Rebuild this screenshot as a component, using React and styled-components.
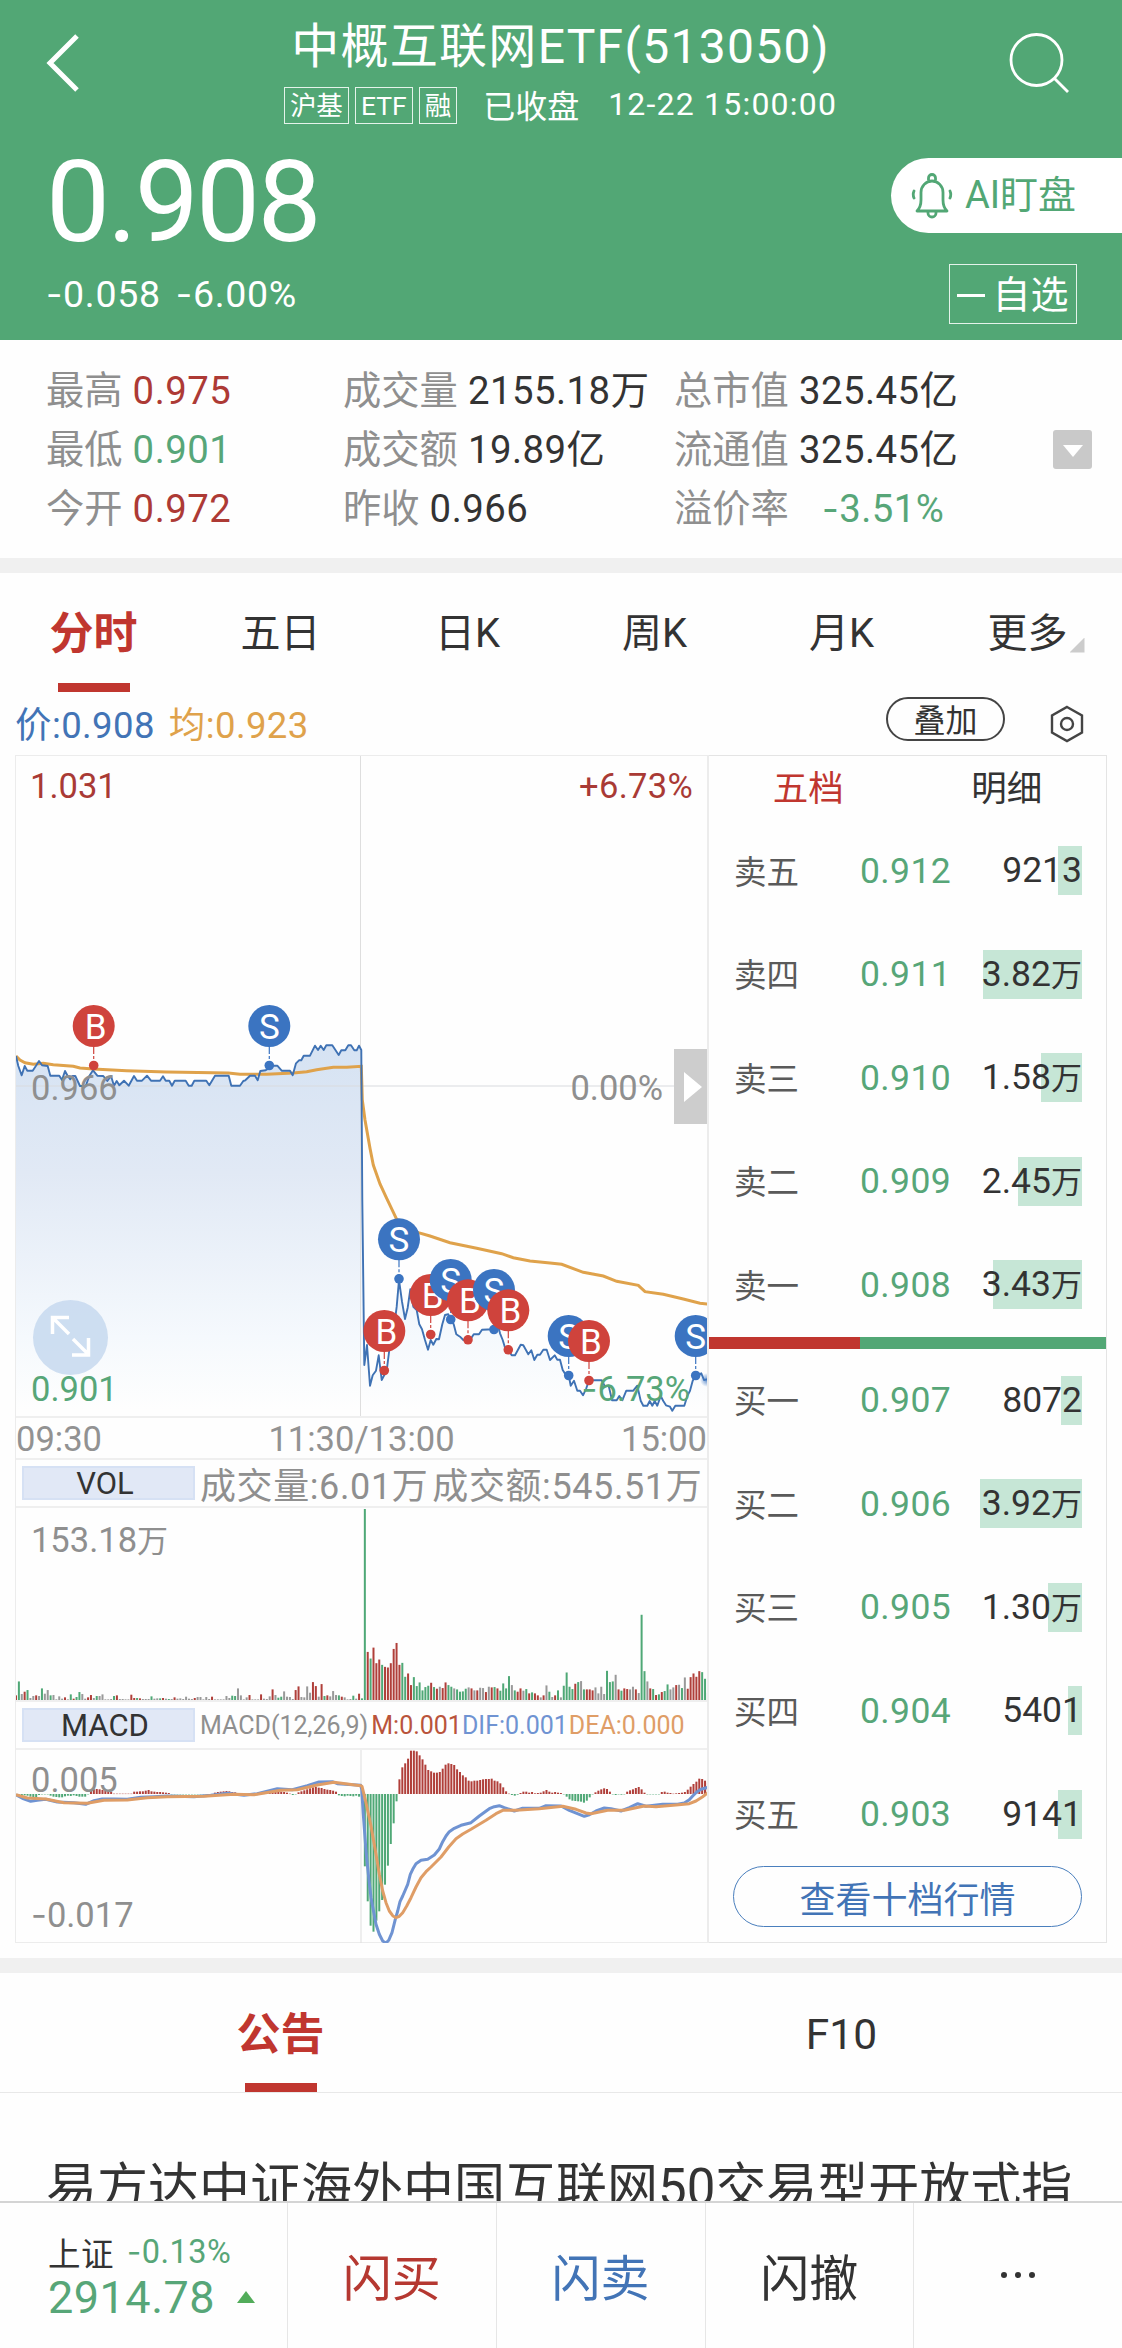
import styled, { createGlobalStyle } from "styled-components";

const GlobalStyle = createGlobalStyle`
  :root {
    --green: #52a775;
    --green-text: #57a678;
    --red: #c0362f;
    --red-text: #ad3a35;
    --blue: #3b74c1;
    --orange: #dfa24b;
    --ink: #333;
    --muted: #8f8f8f;
    --line: #ececec;
    --band: #f0f0f0;
  }
  * {
    box-sizing: border-box;
  }
  body {
    margin: 0;
    background: #fefefe;
    color: var(--ink);
    font-family: Roboto, "Noto Sans CJK SC", sans-serif;
  }
`;

const Screen = styled.div`
  display: flex;
  flex-direction: column;
  width: 1122px;
  height: 2348px;
  overflow: hidden;
  background: #fefefe;
`;

/* ---------- header ---------- */

const Header = styled.header`
  flex: none;
  height: 340px;
  padding-left: 46px;
  background: var(--green);
  color: #fff;
`;

const TitleBar = styled.div`
  display: flex;
  justify-content: space-between;
  align-items: flex-start;
  height: 137px;
  padding-right: 52px;
`;

const BackIcon = styled.svg`
  width: 36px;
  height: 60px;
  margin-top: 33px;
`;

const SearchIcon = styled.svg`
  width: 62px;
  height: 62px;
  margin-top: 33px;
`;

const TitleGroup = styled.div`
  display: flex;
  flex-direction: column;
  align-items: center;
  padding: 16px 0 0 31px;
`;

const Title = styled.h1`
  margin: 0;
  font-size: 48px;
  font-weight: 400;
  line-height: 62px;
  letter-spacing: 1.3px;
  white-space: nowrap;
`;

const SubTitle = styled.div`
  display: flex;
  align-items: center;
  height: 37px;
  margin-top: 9px;
  font-size: 32px;
  white-space: nowrap;
`;

const Tag = styled.span`
  height: 37px;
  margin-right: 6px;
  padding: 0 5px;
  border: 1.5px solid #e4f3ea;
  font-size: 26.5px;
  line-height: 35px;
`;

const MarketState = styled.span`
  margin: 0 29px 0 20px;
  padding-bottom: 4px;
`;

const MarketTime = styled.span`
  padding-bottom: 4px;
  letter-spacing: 1.2px;
`;

const QuoteRow = styled.div`
  display: flex;
  justify-content: space-between;
`;

const LastPrice = styled.div`
  height: 128px;
  font-size: 114px;
  line-height: 130px;
  letter-spacing: -2.7px;
`;

const Change = styled.div`
  display: flex;
  gap: 15px;
  font-size: 37.5px;
  line-height: 58px;
  letter-spacing: 0.7px;
`;

const HeaderActions = styled.div`
  display: flex;
  flex-direction: column;
  align-items: flex-end;
  padding-top: 21px;
`;

const WatchPill = styled.button`
  display: flex;
  align-items: center;
  gap: 12px;
  width: 231px;
  height: 75px;
  padding: 0 0 0 20px;
  border: 0;
  border-radius: 38px 0 0 38px;
  background: #fff;
  color: var(--green);
  font: 38px/75px Roboto, "Noto Sans CJK SC", sans-serif;
`;

const FavButton = styled.button`
  display: flex;
  align-items: center;
  justify-content: center;
  gap: 7px;
  width: 128px;
  height: 60px;
  margin: 31px 45px 0 0;
  padding: 2px 0 0;
  border: 1.5px solid #e4f3ea;
  background: none;
  color: #fff;
  font: 38px/56px Roboto, "Noto Sans CJK SC", sans-serif;
  &::before {
    content: "";
    width: 28px;
    height: 3px;
    background: #fff;
  }
`;

const Hyphen = styled.span`
  font-family: Inter, sans-serif;
  font-size: 0.95em;
`;

/* ---------- stats ---------- */

const Stats = styled.section`
  display: flex;
  flex: none;
  align-items: center;
  height: 218px;
  padding: 1px 0 0 46px;
  font-size: 38.3px;
`;

const StatColumn = styled.div`
  width: ${({ $width }) => $width}px;
`;

const Stat = styled.div`
  display: flex;
  gap: ${({ $gap = 10 }) => $gap}px;
  line-height: 59px;
  color: var(--muted);
  white-space: nowrap;
`;

const tones = {
  up: "var(--red-text)",
  down: "var(--green-text)",
  plain: "var(--ink)",
};

const StatValue = styled.b`
  font-weight: 400;
  letter-spacing: 0.5px;
  color: ${({ $tone = "plain" }) => tones[$tone]};
`;

const MoreButton = styled.button`
  display: flex;
  align-items: center;
  justify-content: center;
  width: 39px;
  height: 39px;
  padding: 3px 0 0;
  border: 0;
  border-radius: 3px;
  background: #c9c9c9;
`;

const Band = styled.div`
  flex: none;
  height: 15px;
  background: var(--band);
`;

/* ---------- tabs ---------- */

const Tabs = styled.nav`
  display: flex;
  flex: none;
  height: ${({ $height = 119 }) => $height}px;
  border-bottom: ${({ $ruled }) => ($ruled ? "1.5px solid #e8e8e8" : "0")};
`;

const Tab = styled.div`
  display: flex;
  flex: 1;
  flex-direction: column;
  align-items: center;
  justify-content: space-between;
  padding-top: ${({ $top = 31 }) => $top}px;
  color: ${({ $active }) => ($active ? "var(--red)" : "var(--ink)")};
  font-size: ${({ $active, $size = 40 }) => ($active ? 44 : $size)}px;
  font-weight: ${({ $active }) => ($active ? 700 : 400)};
  line-height: 60px;
  white-space: nowrap;
  &::after {
    content: "";
    width: 72px;
    height: 9px;
    background: ${({ $active }) => ($active ? "var(--red)" : "transparent")};
  }
`;

const TabLabel = styled.span`
  display: flex;
  align-items: center;
`;

const Corner = styled.i`
  width: 15px;
  height: 15px;
  margin: 22px -15px 0 2px;
  background: #ccc;
  clip-path: polygon(100% 0, 100% 100%, 0 100%);
`;

const Legend = styled.div`
  display: flex;
  flex: none;
  align-items: center;
  gap: 14px;
  height: 63px;
  padding: 0 37px 0 15px;
  font-size: 36.5px;
`;

const LegendItem = styled.span`
  padding-bottom: 2px;
  color: ${({ $color }) => $color};
  letter-spacing: 0.4px;
`;

const OverlayButton = styled.button`
  width: 119px;
  height: 44px;
  margin: -9px 30px 0 auto;
  padding: 0 0 2px;
  border: 2px solid #444;
  border-radius: 22px;
  background: none;
  color: var(--ink);
  font: 32px/38px "Noto Sans CJK SC", sans-serif;
`;

/* ---------- charts ---------- */

const Board = styled.main`
  display: flex;
  flex: none;
  height: 1203px;
  padding: 0 15px 15px;
`;

const Charts = styled.section`
  width: 694px;
  border: 1.5px solid var(--line);
  border-right-width: 2px;
`;

const Stage = styled.div`
  position: relative;
  height: ${({ $height }) => $height}px;
  border-bottom: 2px solid #efefef;
  &:last-child {
    border-bottom: 0;
  }
  & > svg {
    display: block;
    width: 100%;
    height: 100%;
    overflow: hidden;
  }
`;

const SideHandle = styled.button`
  position: absolute;
  right: 0;
  top: 293px;
  display: flex;
  align-items: center;
  justify-content: center;
  width: 33px;
  height: 75px;
  padding: 0 0 0 5px;
  border: 0;
  background: #cdcdcd;
`;

const ExpandButton = styled.button`
  position: absolute;
  left: 17px;
  bottom: 41px;
  width: 75px;
  height: 75px;
  padding: 0;
  border: 0;
  border-radius: 50%;
  background: #c9daf0e6;
`;

const TimeAxis = styled.div`
  display: flex;
  justify-content: space-between;
  height: 42px;
  border-bottom: 2px solid #efefef;
  color: #929292;
  font-size: 34.5px;
  line-height: 43px;
`;

const IndicatorBar = styled.div`
  display: flex;
  align-items: center;
  height: 48px;
  padding-left: 6px;
  border-bottom: 2px solid #efefef;
  white-space: nowrap;
`;

const IndicatorTag = styled.span`
  width: 173px;
  height: 34px;
  margin-right: 5px;
  padding-right: 7px;
  border: 2px solid #d6e1f4;
  background: #e1e8f6;
  font-size: 31px;
  line-height: 32px;
  text-align: center;
`;

const IndicatorText = styled.span`
  margin-right: ${({ $gap = 0 }) => $gap}px;
  color: ${({ $color = "var(--muted)" }) => $color};
  font-size: ${({ $size }) => $size}px;
  letter-spacing: ${({ $spacing = 0 }) => $spacing}px;
`;

/* ---------- order book ---------- */

const Book = styled.aside`
  display: flex;
  flex: 1;
  flex-direction: column;
  border: 1.5px solid #e4e4e4;
  border-left: 0;
`;

const BookTabs = styled.div`
  display: flex;
  flex: none;
  height: 63px;
  font-size: 35.5px;
  line-height: 66px;
  text-align: center;
`;

const BookTab = styled.span`
  flex: 1;
  color: ${({ $active }) => ($active ? "var(--red)" : "var(--ink)")};
`;

const Levels = styled.div`
  display: flex;
  flex: none;
  flex-direction: column;
  padding: 0 24px 0 25px;
`;

const Level = styled.div`
  display: grid;
  grid-template-columns: 126px 100px 1fr;
  align-items: center;
  height: 103.5px;
  font-size: 35.5px;
`;

const LevelName = styled.span`
  padding-bottom: 3px;
  color: #5a5a5a;
  font-size: 32.5px;
`;

const LevelPrice = styled.span`
  color: var(--green-text);
  letter-spacing: 0.4px;
`;

const LevelVolume = styled.span`
  height: 49px;
  background: linear-gradient(#c6e6d6, #c6e6d6) right / ${({ $bar }) => $bar}px 100% no-repeat;
  line-height: 49px;
  text-align: right;
  white-space: nowrap;
`;

const Wan = styled.span`
  font-size: 31px;
`;

const Ratio = styled.div`
  flex: none;
  height: 12px;
  background: linear-gradient(90deg, var(--red) 38%, var(--green) 38%);
`;

const DepthButton = styled.button`
  flex: none;
  height: 61px;
  margin: 0 24px;
  border: 1.5px solid #4a7fbd;
  border-radius: 31px;
  background: none;
  color: #4274b6;
  font: 36px/54px "Noto Sans CJK SC", sans-serif;
`;

/* ---------- footer ---------- */

const News = styled.div`
  flex: 1;
  min-height: 0;
  padding: 65px 46px 0;
  overflow: hidden;
  font-size: 51px;
  line-height: 60px;
  white-space: nowrap;
`;

const BottomBar = styled.footer`
  display: grid;
  grid-template-columns: 287px repeat(4, 1fr);
  flex: none;
  height: 147px;
  border-top: 2px solid #d4d4d4;
`;

const IndexCell = styled.div`
  padding: 26px 0 0 48px;
  color: var(--green-text);
`;

const IndexLine = styled.div`
  display: flex;
  align-items: center;
  gap: ${({ $gap }) => $gap}px;
  height: ${({ $height }) => $height}px;
  font-size: ${({ $size }) => $size}px;
  letter-spacing: 0.5px;
`;

const IndexName = styled.span`
  color: var(--ink);
`;

const Action = styled.div`
  display: flex;
  align-items: center;
  justify-content: center;
  padding-bottom: 2px;
  border-left: 1.5px solid #e6e6e6;
  color: ${({ $color = "var(--ink)" }) => $color};
  font-size: 49px;
`;

/* ---------- data ---------- */

const stats = [
  {
    width: 297,
    rows: [
      ["最高", "0.975", "up"],
      ["最低", "0.901", "down"],
      ["今开", "0.972", "up"],
    ],
  },
  {
    width: 331,
    rows: [
      ["成交量", "2155.18万"],
      ["成交额", "19.89亿"],
      ["昨收", "0.966"],
    ],
  },
  {
    width: 379,
    rows: [
      ["总市值", "325.45亿"],
      ["流通值", "325.45亿"],
      ["溢价率", "-3.51%", "down", 33],
    ],
  },
];

const periods = ["分时", "五日", "日K", "周K", "月K", "更多"];

const asks = [
  ["卖五", "0.912", "9213", 24],
  ["卖四", "0.911", "3.82万", 99],
  ["卖三", "0.910", "1.58万", 41],
  ["卖二", "0.909", "2.45万", 64],
  ["卖一", "0.908", "3.43万", 89],
];

const bids = [
  ["买一", "0.907", "8072", 21],
  ["买二", "0.906", "3.92万", 102],
  ["买三", "0.905", "1.30万", 34],
  ["买四", "0.904", "5401", 14],
  ["买五", "0.903", "9141", 24],
];

// Curves are kept per trading session, in thirds of a pixel from the session origin.
const toPoints = (text, ox, oy) =>
  text
    .trim()
    .split(/\s+/)
    .map((pair) => {
      const [x, y] = pair.split(",").map(Number);
      return `${(ox + x / 3).toFixed(1)},${(oy + y / 3).toFixed(1)}`;
    })
    .join(" ");

const price =
  toPoints(
    `48,168 55,198 65,226 74,198 82,212 98,212 108,197 117,183 126,196 143,198 151,227 178,227 186,240
    195,213 203,228 211,238 217,228 226,228 240,258 257,258 268,228 279,211 292,227 310,228 322,243
    333,228 342,257 350,243 358,256 372,242 386,257 402,228 411,242 426,242 441,227 453,242 480,242
    489,229 497,242 508,242 516,257 524,242 557,242 566,257 575,257 583,242 619,242 628,256 645,227
    686,227 694,257 720,257 730,243 736,241 750,227 765,227 773,241 781,213 797,211 820,197 832,197
    845,212 870,212 878,226 888,190 897,181 904,181 911,167 930,167 945,137 954,150 962,137 971,150
    979,136 997,136 1016,165 1024,151 1036,151 1045,136 1053,136 1063,151 1070,151 1077,137 1084,150
    1087,600`,
    0,
    1000
  ) +
  " " +
  toPoints(
    `43,735 51,675 60,797 68,766 78,752 86,706 95,780 103,765 110,752 118,690 130,640 140,560 147,480
    156,545 165,597 173,563 181,508 190,560 200,570 208,613 216,628 225,660 234,689 242,660 250,674
    259,657 267,658 277,613 285,585 295,583 303,600 311,613 319,643 330,650 340,660 354,660 362,657
    371,643 387,643 396,629 431,628 440,600 450,640 458,660 467,690 475,690 485,706 495,706 512,674
    520,676 535,703 544,691 553,720 562,704 570,704 580,689 590,689 600,720 614,706 622,719 630,719
    638,750 648,766 656,766 662,797 672,782 682,812 690,812 699,826 709,805 717,781 755,781 765,800
    776,797 786,841 800,841 808,828 817,841 829,812 850,812 862,797 872,842 880,857 892,857 899,843
    907,857 914,843 922,857 932,828 940,843 948,856 960,860 967,872 976,857 1003,857 1012,828
    1020,812 1028,782 1037,766 1046,766 1054,760 1062,780 1072,778`,
    350,
    1120
  );

const average =
  toPoints(
    `48,168 60,180 75,188 100,193 130,190 160,194 220,199 240,204 280,207 380,212 500,216 685,219
    720,223 800,223 880,219 920,215 950,209 1000,202 1040,202 1084,199 1087,300 1095,360`,
    0,
    1000
  ) +
  " " +
  toPoints(
    `60,85 70,135 90,192 110,235 140,298 175,325 205,338 240,348 300,368 380,385 455,401 490,413
    540,423 600,429 635,433 700,457 760,468 800,484 865,496 885,515 940,523 1000,537 1050,550
    1074,552`,
    350,
    1120
  );

const trades = [
  ["B", 93.7, 1026],
  ["S", 269.3, 1026],
  ["B", 384.3, 1331],
  ["S", 399, 1239.3],
  ["B", 430.7, 1295],
  ["S", 450.7, 1280],
  ["B", 468, 1300.3],
  ["S", 494, 1290],
  ["B", 508.3, 1310.3],
  ["S", 568.7, 1336],
  ["B", 589, 1341],
  ["S", 695.7, 1336],
];

// One bar per minute: r = up, g = down, x = flat, then the height in thirds of a pixel.
const volume = `r14 g56 x18 r25 g30 x6 x12 r14 x12 g35 x19 x30 g14 x15 x2 x11 x4 r8 x2 g17 r4 g9 g24 x18
x4 r8 r15 x6 g12 x12 x17 x2 x2 x3 g12 r14 x3 x3 x2 x2 r16 r6 g6 r5 x3 x3 x3 g11 x4 x5 g5 r6 x4 g3 x3
r8 x4 x5 x3 x10 x4 x3 r6 x9 x9 x2 x9 x3 r10 x2 x2 x2 x2 x12 x6 g13 g12 x35 x14 x2 x8 r15 x2 x2 x2 r17
x4 x3 x11 r32 x15 g7 g10 x26 x10 x9 x3 r30 r41 x9 x8 x41 x22 r54 r42 x10 r48 g12 r14 x11 x27 x15 g14
r10 x8 x2 x3 g13 x4 r19 g5 g576 r145 g125 r158 r111 r122 g106 r100 r98 r111 r154 r172 r106 g112 g70
r80 r45 g69 g42 g53 g29 g39 g43 r52 g39 r34 x40 r36 r53 g45 g40 x35 g32 g25 g26 g34 x38 r35 x29 r29
x37 x36 r24 x40 r38 g39 r35 g28 g50 g35 g72 x45 g29 r25 r35 x28 g33 r20 g23 r20 r14 x8 r14 x44 g25 x9
r14 g29 x8 g43 g83 g40 g33 r49 g54 x57 g32 r32 r32 r29 x38 x20 x40 x18 g88 g54 g56 x76 r32 g28 r35 r33
x32 x40 r32 x21 g257 g87 x56 r35 g33 r15 g17 r24 g27 g47 x32 x38 r45 x46 g36 x68 r34 r69 r80 r70 r87
g84 g64 x22`.split(/\s+/);

const histogram = `0 -2 -3 -4 -5 -8 -9 -9 -3 -1 -1 0 -5 -8 -9 -10 -10 -7 -5 -6 -4 -6 -8 -8 -8 0 12 14 15
14 12 9 8 7 1 1 1 1 1 1 1 7 7 8 8 10 12 8 7 6 6 5 4 3 0 0 0 0 0 0 0 0 0 0 0 0 0 0 0 4 6 7 8 9 8 6 5
2 0 0 0 1 1 0 0 0 1 4 6 8 9 8 7 6 4 1 -3 0 5 8 11 14 17 20 21 19 18 15 13 12 10 7 -4 -6 -7 -5 -6 -7
-5 -8 -5 -217 -322 -395 -413 -380 -352 -318 -272 -215 -150 -88 -22 44 80 92 106 130 130 128 116 104
88 72 68 64 64 66 76 88 92 90 87 74 66 56 50 40 38 40 40 42 44 45 45 46 40 38 32 20 8 1 -3 -5 -2 3 7
7 4 6 2 3 4 8 12 7 4 6 4 3 -1 -8 -16 -20 -21 -22 -23 -26 -20 -10 -1 5 10 14 17 15 7 0 -3 -1 -2 0 7
11 14 18 21 14 4 0 0 0 0 0 6 7 4 3 1 2 3 4 6 13 22 30 37 46 45 40 34`
  .split(/\s+/)
  .map(Number);

const dif =
  toPoints(
    `6,461 25,472 50,481 70,478 95,475 130,483 180,485 215,490 240,479 265,474 300,474 340,475 380,469
    420,467 460,465 540,467 590,463 640,457 690,463 730,458 790,443 835,446 880,434 915,423 955,422
    970,428 1040,433`,
    14,
    1640
  ) +
  " " +
  toPoints(
    `17,535 22,610 30,720 38,800 45,860 60,940 70,970 80,990 90,996 98,988 108,965 118,925 125,900 132,872
    140,855 155,820 163,790 170,775 180,758 195,748 215,745 235,732 250,714 260,692 270,675 280,662
    295,652 315,643 345,635 370,615 400,593 415,587 430,584 445,590 475,600 500,592 550,592 570,584
    615,585 640,598 685,616 700,611 720,600 745,591 765,593 795,600 820,590 845,578 870,586 920,580
    965,580 985,576 1000,566 1010,555 1022,543 1035,535 1056,529`,
    356,
    1610
  );

const dea =
  toPoints(
    `6,461 40,471 95,474 150,485 220,487 270,478 340,477 400,470 460,467 570,466 660,460 720,461
    800,448 850,446 910,432 960,424 1040,434`,
    14,
    1640
  ) +
  " " +
  toPoints(
    `18,526 30,575 45,645 60,730 70,790 80,840 90,875 100,900 110,914 120,920 130,916 140,905 152,885
    165,860 180,828 195,800 210,782 225,768 255,738 278,708 300,683 320,669 345,655 390,628 420,608
    440,598 480,598 550,593 620,586 660,595 690,606 705,608 755,598 805,598 865,585 900,587 960,582
    1000,578 1020,570 1040,557 1056,545`,
    356,
    1610
  );

const barColors = { r: "#b03f3a", g: "#4fa876", x: "#999" };
const minuteX = (i) => 15 + i * 2.883;

/* ---------- parts ---------- */

const Signed = ({ children }) =>
  children.startsWith("-") ? (
    <span>
      <Hyphen>-</Hyphen>
      {children.slice(1)}
    </span>
  ) : (
    children
  );

const BellIcon = () => (
  <svg width="42" height="46" viewBox="0 0 42 46" fill="none" stroke="currentColor" strokeWidth="2.8">
    <path d="M17.5 7.500V5a3.500 3.500 0 0 1 7 0v2.500" />
    <path d="M6 38c3-3 4-6 4-11v-7.500a11 11.500 0 0 1 22 0V27c0 5 1 8 4 11z" strokeLinejoin="round" />
    <path d="M17 39v1a4 4 0 0 0 8 0v-1M3 18q-1.500 3.500 0 7M39 18q1.500 3.500 0 7" strokeLinecap="round" />
  </svg>
);

const PriceChart = () => (
  <svg viewBox="16 756 691 660" preserveAspectRatio="none" fontSize="34.500">
    <defs>
      <linearGradient id="area" gradientUnits="userSpaceOnUse" x1="0" y1="1045" x2="0" y2="1410">
        <stop offset="0" stopColor="#d6e3f3" />
        <stop offset="0.35" stopColor="#e1e9f5" />
        <stop offset="0.8" stopColor="#f5f9fd" />
        <stop offset="1" stopColor="#fefefe" />
      </linearGradient>
      <radialGradient id="glow">
        <stop offset="0" stopColor="#3b74c1" stopOpacity="0.8" />
        <stop offset="1" stopColor="#3b74c1" stopOpacity="0" />
      </radialGradient>
    </defs>
    <polygon points={`16,1416 ${price} 708,1416`} fill="url(#area)" />
    <path d="M360.500 755v662" stroke="#dedede" strokeWidth="1" />
    <path d="M16 1086h692" stroke="#dadde0" strokeWidth="1.500" opacity="0.7" />
    <polyline points={average} fill="none" stroke="#dfa24b" strokeWidth="3" />
    <polyline points={price} fill="none" stroke="#3f72b4" strokeWidth="1.900" strokeLinejoin="round" />
    <circle cx="707" cy="1380" r="7" fill="url(#glow)" />
    <g fill="#8f8f8f">
      <text x="31" y="1099.500">0.966</text>
      <text x="663" y="1099.500" textAnchor="end">0.00%</text>
    </g>
    <g fill="#a93a35">
      <text x="30" y="798">1.031</text>
      <text x="693" y="798" textAnchor="end" letterSpacing="0.300">+6.73%</text>
    </g>
    {trades.map(([side, x, y]) => {
      const color = side === "B" ? "#cf433c" : "#3b74c1";
      return (
        <g key={x} fill={color}>
          <path d={`M${x} ${y + 20}v16`} stroke={color} strokeWidth="1.200" strokeDasharray="8 2 3 2" />
          <circle cx={x} cy={y + 39.5} r="4.800" />
          <circle cx={x} cy={y} r="21" />
          <text x={side === "B" ? x + 2 : x} y={y + 12.5} fill="#fff" fontSize="35" textAnchor="middle">
            {side}
          </text>
        </g>
      );
    })}
    <g fill="#57a678">
      <text x="31" y="1400.500">0.901</text>
      <text x="690" y="1401" textAnchor="end"><tspan fontFamily="Inter">-</tspan>6.73%</text>
    </g>
  </svg>
);

const VolumeChart = () => (
  <svg viewBox="16 1507 691 193" preserveAspectRatio="none">
    {volume.map((bar, i) => {
      const height = Number(bar.slice(1)) / 3;
      return <rect key={i} x={minuteX(i)} y={1700 - height} width="2" height={height} fill={barColors[bar[0]]} />;
    })}
    <text x="31" y="1551" fill="#8f8f8f" fontSize="34.500">
      153.18<tspan fontSize="31">万</tspan>
    </text>
  </svg>
);

const MacdChart = () => (
  <svg viewBox="16 1749 691 193" preserveAspectRatio="none" fontSize="34.500">
    <path d="M361 1749v193" stroke="#dedede" strokeWidth="1" />
    {histogram.map((value, i) => (
      <rect
        key={i}
        x={minuteX(i)}
        y={value > 0 ? 1793 - value / 3 : 1793}
        width="2"
        height={Math.max(Math.abs(value) / 3, 0.4)}
        fill={value > 0 ? barColors.r : barColors.g}
      />
    ))}
    <g fill="#8f8f8f">
      <text x="31" y="1791">0.005</text>
      <text x="31" y="1926"><tspan fontFamily="Inter">-</tspan>0.017</text>
    </g>
    <g fill="none" strokeWidth="3" strokeLinejoin="round">
      <polyline points={dif} stroke="#6f93d2" />
      <polyline points={dea} stroke="#df9d66" />
    </g>
  </svg>
);

const LevelList = ({ rows }) => (
  <Levels>
    {rows.map(([name, value, amount, bar]) => (
      <Level key={name}>
        <LevelName>{name}</LevelName>
        <LevelPrice>{value}</LevelPrice>
        <LevelVolume $bar={bar}>
          {amount.replace("万", "")}
          {amount.endsWith("万") && <Wan>万</Wan>}
        </LevelVolume>
      </Level>
    ))}
  </Levels>
);

export default function App() {
  return (
    <>
      <GlobalStyle />
      <Screen>
        <Header>
          <TitleBar>
            <BackIcon viewBox="0 0 36 60" fill="none" stroke="#fff" strokeWidth="5">
              <path d="M31 3 4 30l27 27" />
            </BackIcon>
            <TitleGroup>
              <Title>中概互联网ETF(513050)</Title>
              <SubTitle>
                <Tag>沪基</Tag>
                <Tag>ETF</Tag>
                <Tag>融</Tag>
                <MarketState>已收盘</MarketState>
                <MarketTime>12-22 15:00:00</MarketTime>
              </SubTitle>
            </TitleGroup>
            <SearchIcon viewBox="0 0 62 62" fill="none" stroke="#fff" strokeWidth="2.800">
              <circle cx="28.500" cy="27" r="25.500" />
              <path d="m46 45 14 14" />
            </SearchIcon>
          </TitleBar>
          <QuoteRow>
            <div>
              <LastPrice>0.908</LastPrice>
              <Change>
                <Signed>-0.058</Signed>
                <Signed>-6.00%</Signed>
              </Change>
            </div>
            <HeaderActions>
              <WatchPill>
                <BellIcon />
                AI盯盘
              </WatchPill>
              <FavButton>自选</FavButton>
            </HeaderActions>
          </QuoteRow>
        </Header>

        <Stats>
          {stats.map(({ width, rows }) => (
            <StatColumn key={width} $width={width}>
              {rows.map(([label, value, tone, gap]) => (
                <Stat key={label} $gap={gap}>
                  {label}
                  <StatValue $tone={tone}>
                    <Signed>{value}</Signed>
                  </StatValue>
                </Stat>
              ))}
            </StatColumn>
          ))}
          <MoreButton>
            <svg width="20" height="12" viewBox="0 0 20 12">
              <path d="M0 0h20L10 12z" fill="#fff" />
            </svg>
          </MoreButton>
        </Stats>
        <Band />

        <Tabs>
          {periods.map((name, i) => (
            <Tab key={name} $active={i === 0}>
              <TabLabel>
                {name}
                {name === "更多" && <Corner />}
              </TabLabel>
            </Tab>
          ))}
        </Tabs>
        <Legend>
          <LegendItem $color="#4274b6">价:0.908</LegendItem>
          <LegendItem $color="var(--orange)">均:0.923</LegendItem>
          <OverlayButton>叠加</OverlayButton>
          <svg width="36" height="38" viewBox="0 0 36 38" fill="none" stroke="#444" strokeWidth="2.400">
            <path d="M18 2 33 10.500v17L18 36 3 27.500v-17z" />
            <circle cx="18" cy="19" r="6" />
          </svg>
        </Legend>

        <Board>
          <Charts>
            <Stage $height={662}>
              <PriceChart />
              <SideHandle>
                <svg width="18" height="30" viewBox="0 0 18 30">
                  <path d="M0 0v30l18-15z" fill="#fff" />
                </svg>
              </SideHandle>
              <ExpandButton>
                <svg width="75" height="75" viewBox="0 0 75 75" fill="none" stroke="#fff" strokeWidth="3.500">
                  <path d="M36 17.500H19.500V34M20 18l16 16M40 39l16 16M39 55h16.500V38" />
                </svg>
              </ExpandButton>
            </Stage>
            <TimeAxis>
              <span>09:30</span>
              <span>11:30/13:00</span>
              <span>15:00</span>
            </TimeAxis>
            <IndicatorBar>
              <IndicatorTag>VOL</IndicatorTag>
              <IndicatorText $size={36} $spacing={0.6} $gap={4}>成交量:6.01万</IndicatorText>
              <IndicatorText $size={36} $spacing={0.6}>成交额:545.51万</IndicatorText>
            </IndicatorBar>
            <Stage $height={194}>
              <VolumeChart />
            </Stage>
            <IndicatorBar>
              <IndicatorTag>MACD</IndicatorTag>
              <IndicatorText $size={25} $gap={3}>MACD(12,26,9)</IndicatorText>
              <IndicatorText $size={25} $color="#b9543c">M:0.001</IndicatorText>
              <IndicatorText $size={25} $gap={1} $color="#6f93d2">DIF:0.001</IndicatorText>
              <IndicatorText $size={25} $color="#df9d66">DEA:0.000</IndicatorText>
            </IndicatorBar>
            <Stage $height={193}>
              <MacdChart />
            </Stage>
          </Charts>

          <Book>
            <BookTabs>
              <BookTab $active>五档</BookTab>
              <BookTab>明细</BookTab>
            </BookTabs>
            <LevelList rows={asks} />
            <Ratio />
            <LevelList rows={bids} />
            <DepthButton>查看十档行情</DepthButton>
          </Book>
        </Board>
        <Band />

        <Tabs $height={120} $ruled>
          <Tab $active $top={32}>公告</Tab>
          <Tab $top={32} $size={42.5}>F10</Tab>
        </Tabs>
        <News>易方达中证海外中国互联网50交易型开放式指</News>

        <BottomBar>
          <IndexCell>
            <IndexLine $height={45} $size={32.5} $gap={13}>
              <IndexName>上证</IndexName>
              <Signed>-0.13%</Signed>
            </IndexLine>
            <IndexLine $height={46} $size={45} $gap={22}>
              2914.78
              <svg width="18" height="12" viewBox="0 0 18 12">
                <path d="M9 0l9 12H0z" fill="#52ac5a" />
              </svg>
            </IndexLine>
          </IndexCell>
          <Action $color="#b53831">闪买</Action>
          <Action $color="#4274b6">闪卖</Action>
          <Action>闪撤</Action>
          <Action>
            <svg width="36" height="8" viewBox="0 0 36 8" fill="#333">
              <circle cx="4" cy="4" r="3" />
              <circle cx="18" cy="4" r="3" />
              <circle cx="32" cy="4" r="3" />
            </svg>
          </Action>
        </BottomBar>
      </Screen>
    </>
  );
}
